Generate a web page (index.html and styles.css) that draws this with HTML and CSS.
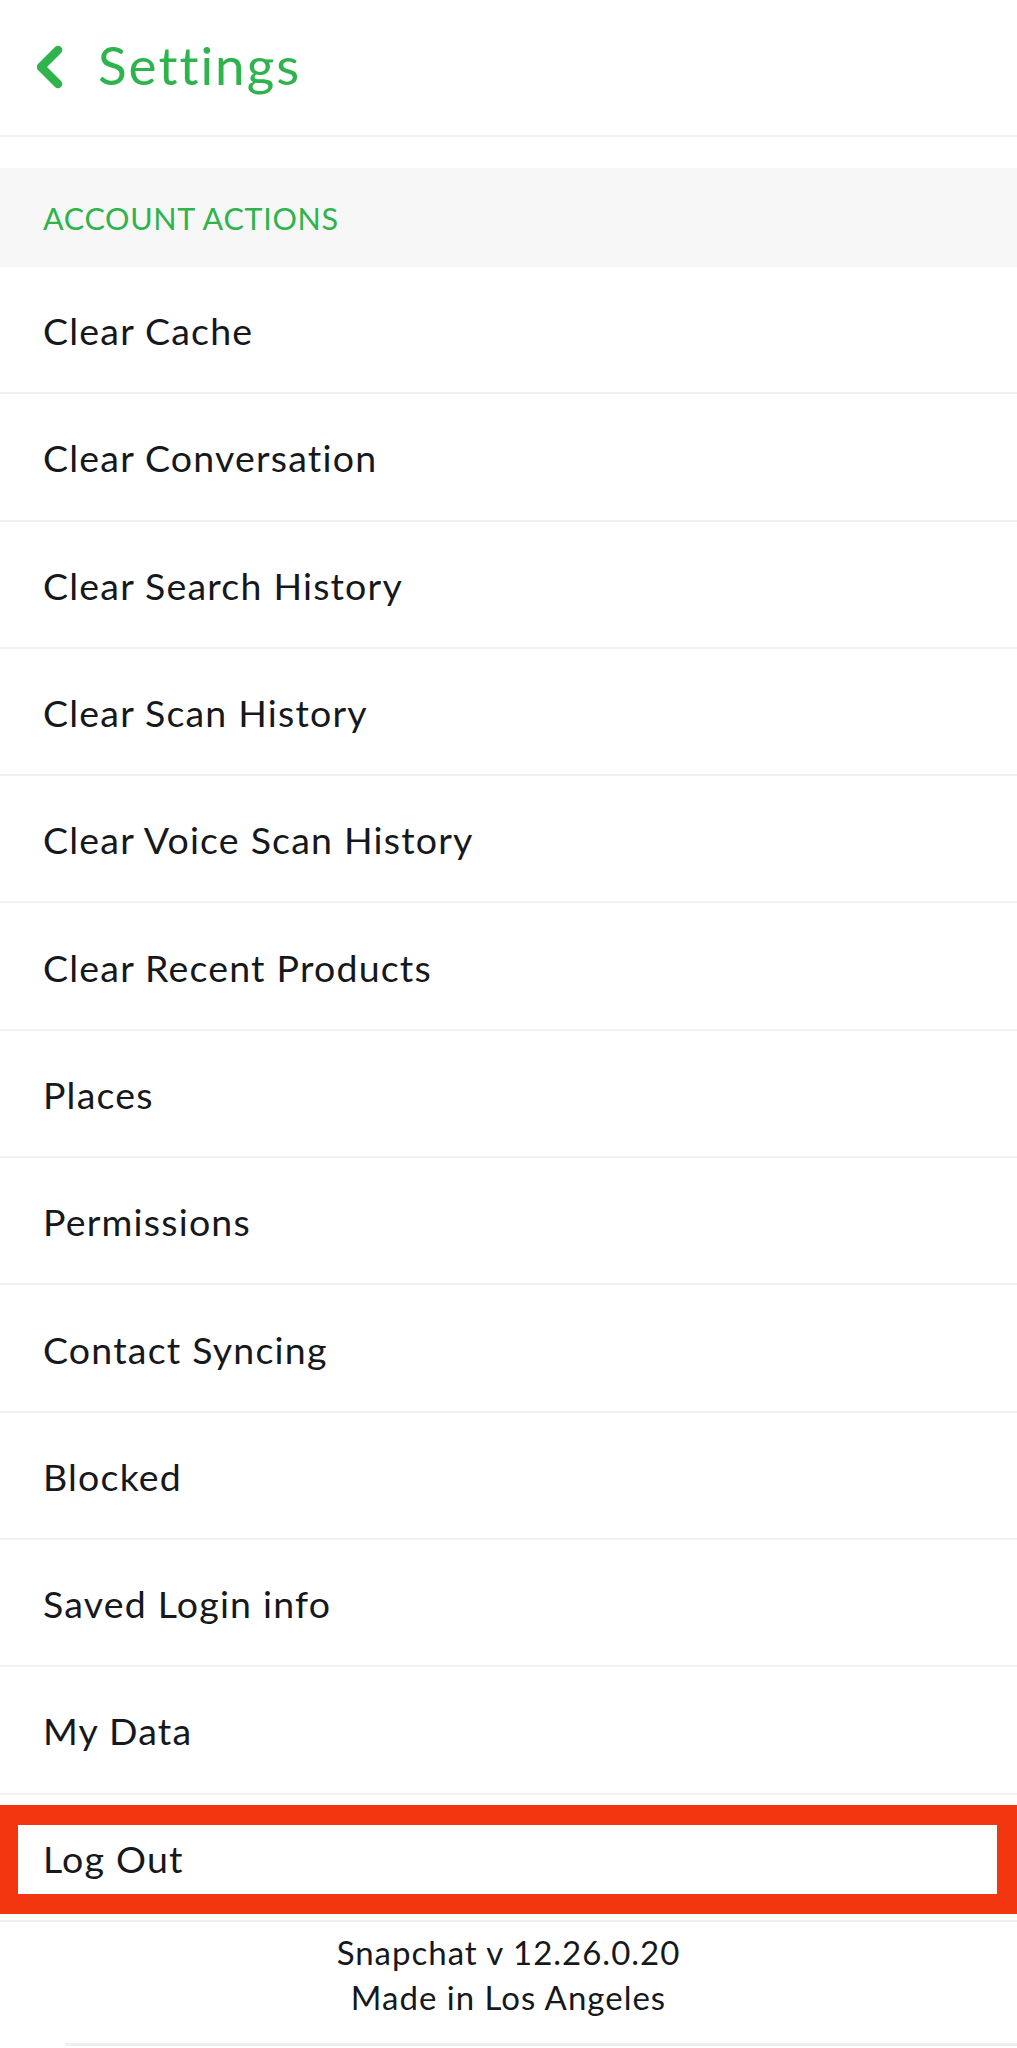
FILE: index.html
```html
<!DOCTYPE html>
<html lang="en">
<head>
<meta charset="utf-8">
<title>Settings</title>
<link rel="stylesheet" href="styles.css">
</head>
<body>
<div class="page">
  <header class="topbar">
    <svg class="back" width="40" height="60" viewBox="0 0 40 60" aria-hidden="true">
      <polyline points="21,14 4,31 21,48" fill="none" stroke="#2fb34c" stroke-width="8.5" stroke-linecap="round" stroke-linejoin="round"/>
    </svg>
    <h1 class="title">Settings</h1>
  </header>
  <div class="section-header">ACCOUNT ACTIONS</div>
  <ul class="list">
    <li class="row">Clear Cache</li>
    <li class="row">Clear Conversation</li>
    <li class="row">Clear Search History</li>
    <li class="row">Clear Scan History</li>
    <li class="row">Clear Voice Scan History</li>
    <li class="row">Clear Recent Products</li>
    <li class="row">Places</li>
    <li class="row">Permissions</li>
    <li class="row">Contact Syncing</li>
    <li class="row">Blocked</li>
    <li class="row">Saved Login info</li>
    <li class="row">My Data</li>
    <li class="row row-highlight">Log Out</li>
  </ul>
  <footer class="footer">
    <p>Snapchat v 12.26.0.20</p>
    <p>Made in Los Angeles</p>
  </footer>
  <div class="bottom-rule"></div>
</div>
</body>
</html>
```

FILE: styles.css
```css
html, body {
  margin: 0;
  padding: 0;
  background: #ffffff;
}

body {
  font-family: "Lato", "Open Sans", "Liberation Sans", sans-serif;
  color: #16181b;
}

.page {
  width: 1017px;
}

.topbar {
  height: 137px;
  display: flex;
  align-items: center;
  padding-left: 37px;
  gap: 21px;
  border-bottom: 2px solid #f1f1f2;
  box-sizing: border-box;
}

.back {
  display: block;
  margin-top: -4px;
}

.title {
  margin: 0;
  font-size: 53px;
  font-weight: 400;
  color: #2fb34c;
  letter-spacing: 2px;
  line-height: 1;
  margin-top: -6px;
}

.section-header {
  margin-top: 31px;
  height: 99px;
  background: #f7f7f8;
  display: flex;
  align-items: center;
  padding-left: 43px;
  font-size: 30.5px;
  color: #2fb34c;
  letter-spacing: 0.7px;
}

.list {
  list-style: none;
  margin: 0;
  padding: 0;
}

.row {
  height: 127.3px;
  box-sizing: border-box;
  border-bottom: 2px solid #f2f2f3;
  display: flex;
  align-items: center;
  padding-left: 43px;
  padding-top: 2px;
  font-size: 37.5px;
  letter-spacing: 1.2px;
}

.row-highlight {
  position: relative;
  border-bottom-color: #eef0f3;
}

.row-highlight::after {
  content: "";
  position: absolute;
  left: 0;
  right: 0;
  top: 10px;
  height: 109px;
  box-sizing: border-box;
  border: 20px solid #f2360f;
  border-left-width: 18px;
}

.footer {
  padding-top: 8px;
  text-align: center;
  font-size: 33px;
  line-height: 45px;
  letter-spacing: 1px;
  color: #16181b;
}

.footer p {
  margin: 0;
}

.bottom-rule {
  margin-top: 23px;
  margin-left: 65px;
  height: 3px;
  background: #eeeeef;
}
```
